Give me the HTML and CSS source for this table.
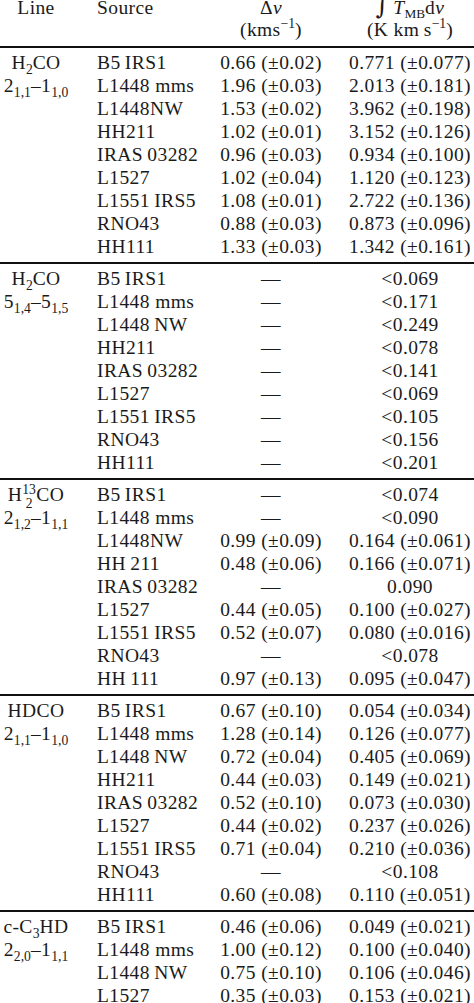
FILE: index.html
```html
<!DOCTYPE html>
<html lang="en">
<head>
    <meta charset="UTF-8">
    <meta name="viewport" content="width=device-width, initial-scale=1.0">
    <title>Line parameters</title>
    <link rel="stylesheet" href="styles.css">
</head>
<body>
    <table class="lines">
        <colgroup>
            <col class="w-line">
            <col class="w-src">
            <col class="w-dv">
            <col class="w-int">
        </colgroup>
        <thead>
            <tr class="head-top">
                <th class="c-line">Line</th>
                <th class="c-src">Source</th>
                <th class="c-dv">&Delta;<i>v</i></th>
                <th class="c-int"><span class="intg">&int;</span>&thinsp;<i>T</i><sub class="mb">MB</sub>d<i>v</i></th>
            </tr>
            <tr class="head-units">
                <th></th>
                <th></th>
                <th class="c-dv">(kms<sup>&minus;1</sup>)</th>
                <th class="c-int">(K km&thinsp;s<sup>&minus;1</sup>)</th>
            </tr>
        </thead>

        <!-- H2CO 2(1,1)-1(1,0) -->
        <tbody class="g1">
            <tr><td class="c-line">H<sub>2</sub>CO</td><td class="c-src">B5&thinsp;IRS1</td><td class="c-dv">0.66 (&plusmn;0.02)</td><td class="c-int">0.771 (&plusmn;0.077)</td></tr>
            <tr><td class="c-line">2<sub>1,1</sub>&ndash;1<sub>1,0</sub></td><td class="c-src">L1448 mms</td><td class="c-dv">1.96 (&plusmn;0.03)</td><td class="c-int">2.013 (&plusmn;0.181)</td></tr>
            <tr><td></td><td class="c-src">L1448NW</td><td class="c-dv">1.53 (&plusmn;0.02)</td><td class="c-int">3.962 (&plusmn;0.198)</td></tr>
            <tr><td></td><td class="c-src">HH211</td><td class="c-dv">1.02 (&plusmn;0.01)</td><td class="c-int">3.152 (&plusmn;0.126)</td></tr>
            <tr><td></td><td class="c-src">IRAS&thinsp;03282</td><td class="c-dv">0.96 (&plusmn;0.03)</td><td class="c-int">0.934 (&plusmn;0.100)</td></tr>
            <tr><td></td><td class="c-src">L1527</td><td class="c-dv">1.02 (&plusmn;0.04)</td><td class="c-int">1.120 (&plusmn;0.123)</td></tr>
            <tr><td></td><td class="c-src">L1551&thinsp;IRS5</td><td class="c-dv">1.08 (&plusmn;0.01)</td><td class="c-int">2.722 (&plusmn;0.136)</td></tr>
            <tr><td></td><td class="c-src">RNO43</td><td class="c-dv">0.88 (&plusmn;0.03)</td><td class="c-int">0.873 (&plusmn;0.096)</td></tr>
            <tr><td></td><td class="c-src">HH111</td><td class="c-dv">1.33 (&plusmn;0.03)</td><td class="c-int">1.342 (&plusmn;0.161)</td></tr>
        </tbody>

        <!-- H2CO 5(1,4)-5(1,5) -->
        <tbody class="g2">
            <tr><td class="c-line">H<sub>2</sub>CO</td><td class="c-src">B5&thinsp;IRS1</td><td class="c-dv">&mdash;</td><td class="c-int">&lt;0.069</td></tr>
            <tr><td class="c-line">5<sub>1,4</sub>&ndash;5<sub>1,5</sub></td><td class="c-src">L1448 mms</td><td class="c-dv">&mdash;</td><td class="c-int">&lt;0.171</td></tr>
            <tr><td></td><td class="c-src">L1448&thinsp;NW</td><td class="c-dv">&mdash;</td><td class="c-int">&lt;0.249</td></tr>
            <tr><td></td><td class="c-src">HH211</td><td class="c-dv">&mdash;</td><td class="c-int">&lt;0.078</td></tr>
            <tr><td></td><td class="c-src">IRAS&thinsp;03282</td><td class="c-dv">&mdash;</td><td class="c-int">&lt;0.141</td></tr>
            <tr><td></td><td class="c-src">L1527</td><td class="c-dv">&mdash;</td><td class="c-int">&lt;0.069</td></tr>
            <tr><td></td><td class="c-src">L1551&thinsp;IRS5</td><td class="c-dv">&mdash;</td><td class="c-int">&lt;0.105</td></tr>
            <tr><td></td><td class="c-src">RNO43</td><td class="c-dv">&mdash;</td><td class="c-int">&lt;0.156</td></tr>
            <tr><td></td><td class="c-src">HH111</td><td class="c-dv">&mdash;</td><td class="c-int">&lt;0.201</td></tr>
        </tbody>

        <!-- H2(13)CO 2(1,2)-1(1,1) -->
        <tbody class="g3">
            <tr><td class="c-line">H<span class="stack"><span>13</span><span>2</span></span>CO</td><td class="c-src">B5&thinsp;IRS1</td><td class="c-dv">&mdash;</td><td class="c-int">&lt;0.074</td></tr>
            <tr><td class="c-line">2<sub>1,2</sub>&ndash;1<sub>1,1</sub></td><td class="c-src">L1448 mms</td><td class="c-dv">&mdash;</td><td class="c-int">&lt;0.090</td></tr>
            <tr><td></td><td class="c-src">L1448NW</td><td class="c-dv">0.99 (&plusmn;0.09)</td><td class="c-int">0.164 (&plusmn;0.061)</td></tr>
            <tr><td></td><td class="c-src">HH&thinsp;211</td><td class="c-dv">0.48 (&plusmn;0.06)</td><td class="c-int">0.166 (&plusmn;0.071)</td></tr>
            <tr><td></td><td class="c-src">IRAS&thinsp;03282</td><td class="c-dv">&mdash;</td><td class="c-int">0.090</td></tr>
            <tr><td></td><td class="c-src">L1527</td><td class="c-dv">0.44 (&plusmn;0.05)</td><td class="c-int">0.100 (&plusmn;0.027)</td></tr>
            <tr><td></td><td class="c-src">L1551&thinsp;IRS5</td><td class="c-dv">0.52 (&plusmn;0.07)</td><td class="c-int">0.080 (&plusmn;0.016)</td></tr>
            <tr><td></td><td class="c-src">RNO43</td><td class="c-dv">&mdash;</td><td class="c-int">&lt;0.078</td></tr>
            <tr><td></td><td class="c-src">HH&thinsp;111</td><td class="c-dv">0.97 (&plusmn;0.13)</td><td class="c-int">0.095 (&plusmn;0.047)</td></tr>
        </tbody>

        <!-- HDCO 2(1,1)-1(1,0) -->
        <tbody class="g4">
            <tr><td class="c-line">HDCO</td><td class="c-src">B5&thinsp;IRS1</td><td class="c-dv">0.67 (&plusmn;0.10)</td><td class="c-int">0.054 (&plusmn;0.034)</td></tr>
            <tr><td class="c-line">2<sub>1,1</sub>&ndash;1<sub>1,0</sub></td><td class="c-src">L1448 mms</td><td class="c-dv">1.28 (&plusmn;0.14)</td><td class="c-int">0.126 (&plusmn;0.077)</td></tr>
            <tr><td></td><td class="c-src">L1448&thinsp;NW</td><td class="c-dv">0.72 (&plusmn;0.04)</td><td class="c-int">0.405 (&plusmn;0.069)</td></tr>
            <tr><td></td><td class="c-src">HH211</td><td class="c-dv">0.44 (&plusmn;0.03)</td><td class="c-int">0.149 (&plusmn;0.021)</td></tr>
            <tr><td></td><td class="c-src">IRAS&thinsp;03282</td><td class="c-dv">0.52 (&plusmn;0.10)</td><td class="c-int">0.073 (&plusmn;0.030)</td></tr>
            <tr><td></td><td class="c-src">L1527</td><td class="c-dv">0.44 (&plusmn;0.02)</td><td class="c-int">0.237 (&plusmn;0.026)</td></tr>
            <tr><td></td><td class="c-src">L1551&thinsp;IRS5</td><td class="c-dv">0.71 (&plusmn;0.04)</td><td class="c-int">0.210 (&plusmn;0.036)</td></tr>
            <tr><td></td><td class="c-src">RNO43</td><td class="c-dv">&mdash;</td><td class="c-int">&lt;0.108</td></tr>
            <tr><td></td><td class="c-src">HH111</td><td class="c-dv">0.60 (&plusmn;0.08)</td><td class="c-int">0.110 (&plusmn;0.051)</td></tr>
        </tbody>

        <!-- c-C3HD 2(2,0)-1(1,1) -->
        <tbody class="g5">
            <tr><td class="c-line">c-C<sub>3</sub>HD</td><td class="c-src">B5&thinsp;IRS1</td><td class="c-dv">0.46 (&plusmn;0.06)</td><td class="c-int">0.049 (&plusmn;0.021)</td></tr>
            <tr><td class="c-line">2<sub>2,0</sub>&ndash;1<sub>1,1</sub></td><td class="c-src">L1448 mms</td><td class="c-dv">1.00 (&plusmn;0.12)</td><td class="c-int">0.100 (&plusmn;0.040)</td></tr>
            <tr><td></td><td class="c-src">L1448&thinsp;NW</td><td class="c-dv">0.75 (&plusmn;0.10)</td><td class="c-int">0.106 (&plusmn;0.046)</td></tr>
            <tr><td></td><td class="c-src">L1527</td><td class="c-dv">0.35 (&plusmn;0.03)</td><td class="c-int">0.153 (&plusmn;0.021)</td></tr>
        </tbody>
    </table>
</body>
</html>
```

FILE: styles.css
```css
body {
    margin: 0;
    background: #fff;
    color: #1a1a1a;
    font-family: "Liberation Serif", "DejaVu Serif", serif;
    font-size: 19.5px;
    overflow: hidden;
}
.lines {
    border-collapse: collapse;
    table-layout: fixed;
    width: 476px;
    margin: 0 0 0 -2px;
    letter-spacing: 0.4px;
}
.w-line { width: 76px; }
.w-src { width: 136px; }
.w-dv { width: 122px; }
.w-int { width: 142px; }
.lines th,
.lines td {
    padding: 0;
    line-height: 23px;
    white-space: nowrap;
    font-weight: normal;
}
.lines .head-top th { line-height: 16px; }
.lines .head-units th { line-height: 27px; padding-bottom: 3px; }
.c-line { text-align: center; }
.lines .c-src { text-align: left; padding-left: 23px; }
.c-dv { text-align: center; }
.lines .c-int { text-align: center; padding-left: 14px; }
tbody { border-top: 2px solid #111; }
.lines tbody tr:first-child td { padding-top: 3px; }
.lines tbody tr:last-child td { padding-bottom: 4px; }
sub,
sup {
    font-size: 0.7em;
    line-height: 0;
    letter-spacing: 0;
}
sub { vertical-align: -0.35em; }
sup { vertical-align: 0.6em; }
sub.mb { font-size: 0.68em; vertical-align: -0.3em; }
.intg {
    font-family: "DejaVu Serif", serif;
    font-size: 1.25em;
    font-style: italic;
    line-height: 0;
}
.stack {
    display: inline-flex;
    flex-direction: column;
    vertical-align: middle;
    font-size: 0.7em;
    line-height: 1;
    letter-spacing: 0;
    margin: -4px 0.5px -4px 0;
}
```
